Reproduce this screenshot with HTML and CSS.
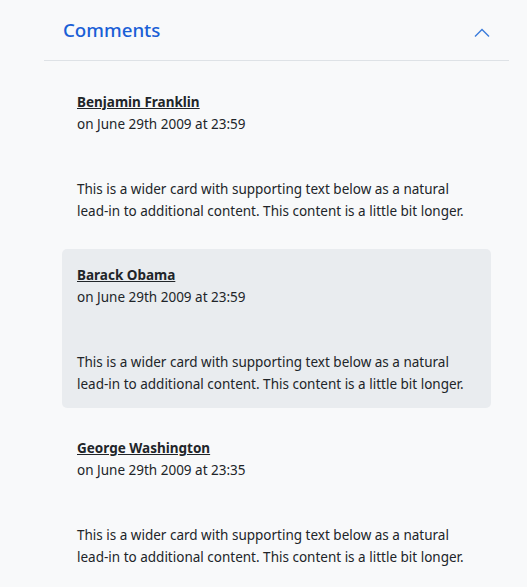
FILE: index.html
```html
<!DOCTYPE html>
<html>
<head>
    <meta charset="utf-8">
    <meta name="viewport" content="width=device-width, initial-scale=1.0">
    <title>Comments</title>
    <link rel="stylesheet" href="styles.css">
</head>
<body>
<div class="m-acc">
    <div class="acc-head">
        <h2>Comments</h2>
        <svg class="acc-icon" width="16" height="9" viewBox="0 0 16 9">
            <polyline points="1,8.5 8,1.5 15,8.5" fill="none" stroke="#3a7bdb" stroke-width="1.4"/>
        </svg>
    </div>
    <div class="acc-body">
        <div class="u-comment">
            <a class="name" href="#">Benjamin Franklin</a>
            <div class="date">on June 29th 2009 at 23:59</div>
            <p>This is a wider card with supporting text below as a natural lead-in to additional content. This content is a little bit longer.</p>
        </div>
        <div class="u-comment z-active">
            <a class="name" href="#">Barack Obama</a>
            <div class="date">on June 29th 2009 at 23:59</div>
            <p>This is a wider card with supporting text below as a natural lead-in to additional content. This content is a little bit longer.</p>
        </div>
        <div class="u-comment">
            <a class="name" href="#">George Washington</a>
            <div class="date">on June 29th 2009 at 23:35</div>
            <p>This is a wider card with supporting text below as a natural lead-in to additional content. This content is a little bit longer.</p>
        </div>
    </div>
</div>
</body>
</html>
```

FILE: styles.css
```css
html, body{
    margin: 0;
    padding: 0;
}
body{
    background-color: #f8f9fa;
    font-family: "Noto Sans", "Open Sans", sans-serif;
    font-size: 13.5px;
    line-height: 22px;
    color: #212529;
}
.m-acc{
    margin-left: 44px;
    width: 465px;
}
/* 标题栏 */
.acc-head{
    display: flex;
    align-items: center;
    justify-content: space-between;
    height: 61px;
    padding: 0 19px;
    box-sizing: border-box;
    border-bottom: 1px solid #dee2e6;
}
.acc-head h2{
    margin: 0;
    font-size: 18.7px;
    font-weight: 500;
    color: #1a5fd6;
    padding-bottom: 1px;
}
.acc-icon{ margin-top: 4px;}

.acc-body{
    padding: 15px 18px 14px;
}
.u-comment{
    padding: 15px 15px 13px;
    margin-bottom: 14px;
    border-radius: 5px;
}
.u-comment.z-active{
    background-color: #e9ecef;
}
.u-comment .name{
    font-weight: 700;
    color: #212529;
    text-decoration: underline;
}
.u-comment .date{
    margin-bottom: 43px;
}
.u-comment p{
    margin: 0;
}
```
